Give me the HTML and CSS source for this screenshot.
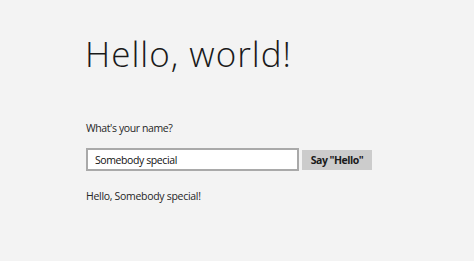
FILE: index.html
```html
<!DOCTYPE html>
<html>
<head>
<meta charset="utf-8">
<link rel="stylesheet" href="styles.css">
</head>
<body>
<main class="page">
  <h1 class="title">Hello, world!</h1>
  <p class="prompt">What's your name?</p>
  <div class="form-row">
    <input class="name-input" type="text" value="Somebody special">
    <button class="say-btn">Say "Hello"</button>
  </div>
  <p class="greeting">Hello, Somebody special!</p>
</main>
</body>
</html>
```
FILE: styles.css
```css
html, body {
  margin: 0;
  padding: 0;
  background: #f3f3f3;
}
body {
  width: 474px;
  height: 261px;
  overflow: hidden;
  font-family: "Open Sans", "Noto Sans", sans-serif;
  color: #222;
}
.page {
  padding: 32px 0 0 85px;
}
.title {
  margin: 0;
  font-size: 35px;
  font-weight: 300;
  line-height: 44px;
  letter-spacing: 1px;
  color: #1a1a1a;
}
.prompt {
  margin: 45px 0 0 1px;
  font-size: 10.5px;
  line-height: 14px;
  letter-spacing: -0.4px;
  color: #262626;
}
.form-row {
  display: flex;
  align-items: center;
  gap: 3px;
  margin: 13px 0 0 1px;
}
.name-input {
  box-sizing: border-box;
  width: 213px;
  height: 23px;
  margin: 0;
  padding: 0 7px;
  border: 2px solid #a9a9a9;
  background: #fff;
  font-family: inherit;
  font-size: 10.5px;
  letter-spacing: -0.4px;
  color: #111;
  outline: none;
}
.say-btn {
  box-sizing: border-box;
  width: 70px;
  height: 20px;
  margin: 0;
  padding: 0;
  border: none;
  background: #cccccc;
  font-family: inherit;
  font-size: 10.5px;
  font-weight: 700;
  letter-spacing: -0.5px;
  color: #1a1a1a;
}
.greeting {
  margin: 18px 0 0 1px;
  font-size: 10.5px;
  line-height: 14px;
  letter-spacing: -0.3px;
  color: #262626;
}
```
